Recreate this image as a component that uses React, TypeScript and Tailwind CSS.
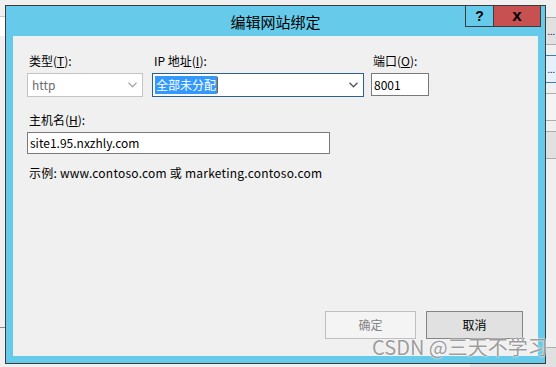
import React from "react";

const FONT = "font-['Noto_Sans_CJK_SC',sans-serif]";

function Chevron({ className }: { className?: string }) {
  return (
    <svg width="9" height="6" viewBox="0 0 9 6" className={className}>
      <path d="M0.5 0.8 L4.5 4.8 L8.5 0.8" fill="none" stroke="currentColor" strokeWidth="1.3" />
    </svg>
  );
}

function Label({ children }: { children: React.ReactNode }) {
  return <div className="h-[16px] pl-[2px] text-[12px] leading-[16px] text-black">{children}</div>;
}

function Desktop() {
  // things behind the dialog window
  return (
    <>
      <div className="absolute left-0 top-[16px] h-[20px] w-[6px] border-t border-[#c8c8c8] bg-white" />
      <div className="absolute left-0 top-[327px] h-px w-[6px] bg-[#8c8c8c]" />
      <div className="absolute left-[540px] top-[17px] flex h-[28px] w-[16px] items-center justify-end border-y border-[#adadad] bg-[#e1e1e1] pr-[1px] text-[9px] leading-none text-[#1a1a60]">
        ...
      </div>
      <div className="absolute left-[540px] top-[55px] flex h-[28px] w-[16px] items-center justify-end border-y border-[#3c7fb1] bg-[#e5f1fb] pr-[1px] text-[9px] leading-none text-[#1a1a60]">
        ...
      </div>
      <div className="absolute left-[540px] top-[93px] h-[28px] w-[16px] border-y border-[#adadad] bg-[#f4f4f4]" />
      <div className="absolute left-[540px] top-[131px] h-[28px] w-[16px] border-y border-[#adadad] bg-[#e1e1e1]" />
      <div className="absolute left-[470px] top-[347px] flex h-[20px] w-[86px] items-start justify-center border-t border-[#adadad] bg-[#e1e1e1] pt-[12px] text-[12px] leading-[16px] text-black" />
    </>
  );
}

export default function App() {
  return (
    <div className={`relative h-[367px] w-[556px] overflow-hidden bg-[#f0f0f0] ${FONT}`}>
      <Desktop />

      <div className="absolute left-[5px] top-[5px] flex h-[359px] w-[541px] flex-col border border-[#3c3c3c] bg-[#66cbea]">
        {/* title bar */}
        <div className="relative flex h-[30px] shrink-0 items-center justify-center pt-[1px] text-[15px] leading-none text-black">
          编辑网站绑定
          <div className="absolute left-[459px] top-[-1px] flex h-[22px] border border-[#3c3c3c]">
            <div className="flex w-[27px] items-center justify-center font-['Liberation_Sans',sans-serif] text-[14px] font-bold leading-none">
              ?
            </div>
            <div className="flex w-[47px] items-center justify-center border-l border-[#3c3c3c] bg-[#c75050] pb-[2px] font-['Liberation_Sans',sans-serif] text-[17px] font-black leading-none">
              x
            </div>
          </div>
        </div>

        {/* client area */}
        <div className="mx-[7px] mb-[7px] flex flex-1 flex-col bg-[#f0f0f0] pl-[14px] pr-[15px] pt-[17px] pb-[17px]">
          <div className="flex">
            <div className="w-[116px]">
              <Label>
                类型(<span className="underline">T</span>):
              </Label>
              <div className="mt-[4px] flex h-[24px] items-center justify-between border border-[#c4c4c4] bg-white pl-[4px] pr-[5px] text-[12px] text-[#6d6d6d]">
                http
                <Chevron className="text-[#a8a8a8]" />
              </div>
            </div>
            <div className="ml-[9px] w-[212px]">
              <Label>
                IP 地址(<span className="underline">I</span>):
              </Label>
              <div className="mt-[4px] flex h-[24px] items-center justify-between border border-[#2d5f8f] bg-white pl-[2px] pr-[5px] text-[12px]">
                <span className="flex items-center">
                  <span className="bg-[#3399ff] px-px leading-[18px] text-white">全部未分配</span>
                  <span className="h-[16px] w-px bg-[#a05a10]" />
                </span>
                <Chevron className="text-[#555]" />
              </div>
            </div>
            <div className="ml-[7px] w-[58px]">
              <Label>
                端口(<span className="underline">O</span>):
              </Label>
              <div className="mt-[4px] flex h-[23px] items-center border border-[#7a7a7a] bg-white pl-[2px] text-[12px] text-black">
                8001
              </div>
            </div>
          </div>

          <div className="mt-[15px]">
            <Label>
              主机名(<span className="underline">H</span>):
            </Label>
            <div className="mt-[4px] flex h-[22px] w-[303px] items-center border border-[#7a7a7a] bg-white pl-[2px] text-[12px] text-black">
              site1.95.nxzhly.com
            </div>
          </div>

          <div className="mt-[11px] pl-[2px] text-[12px] leading-[16px] tracking-[0.22px] text-black">
            示例: www.contoso.com 或 marketing.contoso.com
          </div>

          <div className="mt-auto flex justify-end gap-[10px]">
            <button className="h-[28px] w-[91px] border border-[#bfbfbf] bg-[#f4f4f4] text-[12px] text-[#838383]">
              确定
            </button>
            <button className="h-[28px] w-[97px] border border-[#858585] bg-[#e1e1e1] text-[12px] text-black">
              取消
            </button>
          </div>
        </div>
      </div>

      {/* watermark */}
      <div className="absolute left-[372px] top-[335px] text-[20px] leading-[24px] text-[#9c9c9c] [text-shadow:0_0_2px_#fff,0_0_1px_#fff]">
        CSDN @三天不学习
      </div>
    </div>
  );
}
